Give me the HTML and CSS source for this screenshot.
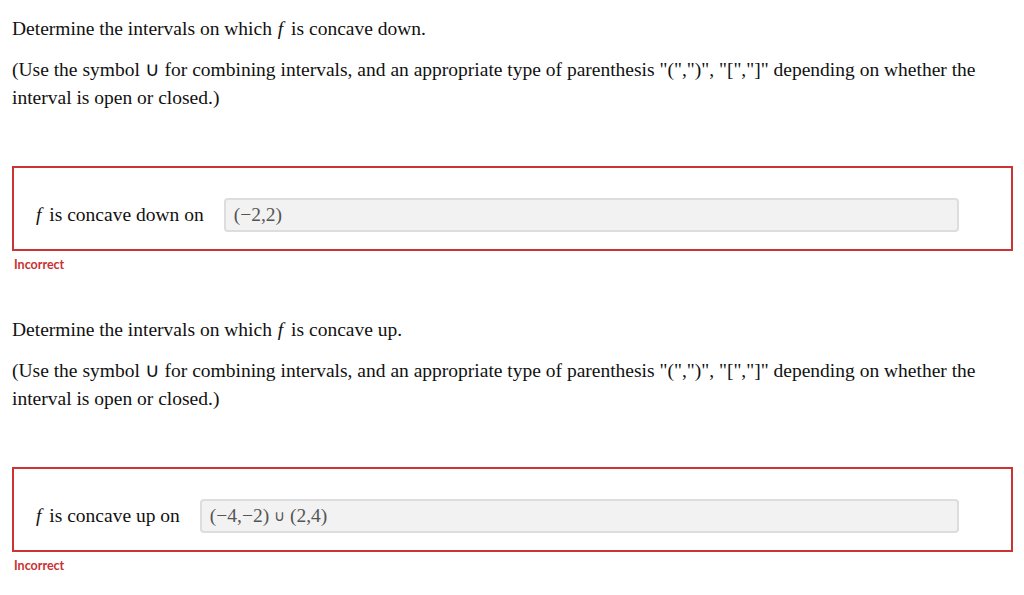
FILE: index.html
```html
<!DOCTYPE html>
<html>
<head>
<meta charset="utf-8">
<link rel="stylesheet" href="styles.css">
</head>
<body>
<div class="page">
  <section class="part">
    <p class="q">Determine the intervals on which <i class="mv">f</i> is concave down.</p>
    <p class="q">(Use the symbol ∪ for combining intervals, and an appropriate type of parenthesis "(",")", "[","]" depending on whether the interval is open or closed.)</p>
    <div class="answer">
      <span class="label"><i class="mv first">f</i> is concave down on</span>
      <div class="input">(−2,2)</div>
    </div>
    <div class="status">Incorrect</div>
  </section>
  <section class="part">
    <p class="q">Determine the intervals on which <i class="mv">f</i> is concave up.</p>
    <p class="q">(Use the symbol ∪ for combining intervals, and an appropriate type of parenthesis "(",")", "[","]" depending on whether the interval is open or closed.)</p>
    <div class="answer">
      <span class="label"><i class="mv first">f</i> is concave up on</span>
      <div class="input">(−4,−2) <span class="cup">∪</span> (2,4)</div>
    </div>
    <div class="status">Incorrect</div>
  </section>
</div>
</body>
</html>
```
FILE: styles.css
```css
html, body {
  margin: 0;
  padding: 0;
  background: #fff;
}
.page {
  padding: 15px 11px 0 12px;
  font-family: "Liberation Serif", "Times New Roman", serif;
  font-size: 19.5px;
  color: #111;
}
.part {
  margin-bottom: 44px;
}
.q {
  margin: 0 0 13px 0;
  line-height: 28px;
}
.q + .q {
  margin-bottom: 54px;
}
.mv {
  margin: 0 3px 0 1px;
}
.mv.first {
  margin-left: 0;
}
.answer {
  border: 2px solid #cc3333;
  display: flex;
  align-items: center;
  gap: 20px;
  padding: 30px 52px 17px 22px;
}
.label {
  white-space: nowrap;
}
.input {
  flex: 1;
  height: 34px;
  box-sizing: border-box;
  background: #f2f2f2;
  border: 2px solid #dddddd;
  border-radius: 4px;
  padding: 0 8px;
  display: flex;
  align-items: center;
  color: #555;
  white-space: pre;
}
.cup {
  font-size: 15px;
}
.status {
  font-family: Lato, "Open Sans", sans-serif;
  font-size: 12.5px;
  font-weight: 700;
  color: #c83232;
  margin: 7px 0 0 2px;
  line-height: 14px;
}
```
